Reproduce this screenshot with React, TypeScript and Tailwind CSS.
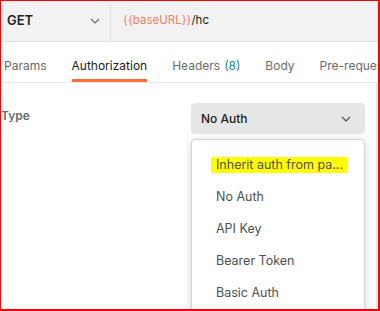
import React from 'react';

const Chevron: React.FC<{ className?: string }> = ({ className }) => (
  <svg viewBox="0 0 12 12" className={className} fill="none" stroke="currentColor" strokeWidth="1.2">
    <polyline points="2,4 6,8 10,4" />
  </svg>
);

const tabs = [
  { label: 'Params' },
  { label: 'Authorization', active: true },
  { label: 'Headers', count: '(8)' },
  { label: 'Body' },
  { label: 'Pre-request Script' },
];

const authTypes = ['Inherit auth from pa...', 'No Auth', 'API Key', 'Bearer Token', 'Basic Auth', 'Digest Auth'];

export default function App() {
  return (
    <div
      className="w-[380px] h-[311px] overflow-hidden bg-white border-t border-l border-r-2 border-b-2 border-[#ff0000] flex flex-col"
      style={{ fontFamily: 'Inter, "Noto Sans", sans-serif' }}
    >
      {/* Request bar */}
      <div className="h-[41px] shrink-0 flex bg-[#f2f2f2] border-b border-[#e3e3e3]">
        <div className="w-[110px] flex items-center justify-between pl-[6px] pr-[9px] border-r border-[#e3e3e3]">
          <span className="text-[13px] font-semibold text-[#212121]">GET</span>
          <Chevron className="w-[12px] h-[12px] text-[#6b6b6b]" />
        </div>
        <div className="flex items-center pl-[12px] text-[11.5px]">
          <span className="text-[#f0806a]">{'{{baseURL}}'}</span>
          <span className="text-[#212121]">/hc</span>
        </div>
      </div>

      {/* Tabs */}
      <div className="h-[41px] shrink-0 flex items-stretch gap-[25px] pl-[3px] border-b border-[#ebebeb] whitespace-nowrap">
        {tabs.map((t) => (
          <div
            key={t.label}
            className={`flex items-center pt-[11px] text-[12px] border-b-[3px] ${
              t.active ? 'border-[#ff6c37] text-[#212121]' : 'border-transparent text-[#6b6b6b]'
            }`}
          >
            {t.label}
            {t.count && <span className="ml-[4px] text-[#0f8a8a]">{t.count}</span>}
          </div>
        ))}
      </div>

      {/* Content */}
      <div className="flex-1 flex">
        <div className="flex-1 relative border-r border-[#e3e3e3]">
          <div className="flex items-start pt-[20px]">
            <span className="w-[190px] pt-[4px] text-[12px] font-semibold text-[#6b6b6b]">Type</span>
            <button className="w-[174px] h-[31px] flex items-center justify-between pl-[10px] pr-[13px] rounded-[4px] bg-[#e6e6e6]">
              <span className="text-[12px] font-medium text-[#212121]">No Auth</span>
              <Chevron className="w-[12px] h-[12px] text-[#505050]" />
            </button>
          </div>

          {/* Dropdown menu */}
          <div className="absolute left-[190px] top-[56px] w-[174px] pt-[9px] bg-white border border-[#d4d4d4] rounded-[4px] shadow-[0_2px_8px_rgba(0,0,0,0.18)]">
            {authTypes.map((a, i) => (
              <div key={a} className="h-[32px] flex items-center pl-[19px]">
                <span
                  className={`px-[5px] leading-[16px] text-[12.5px] text-[#505050] ${
                    i === 0 ? 'bg-[#ffff00]' : ''
                  }`}
                >
                  {a}
                </span>
              </div>
            ))}
          </div>
        </div>
        <div className="w-[1px]" />
      </div>
    </div>
  );
}
